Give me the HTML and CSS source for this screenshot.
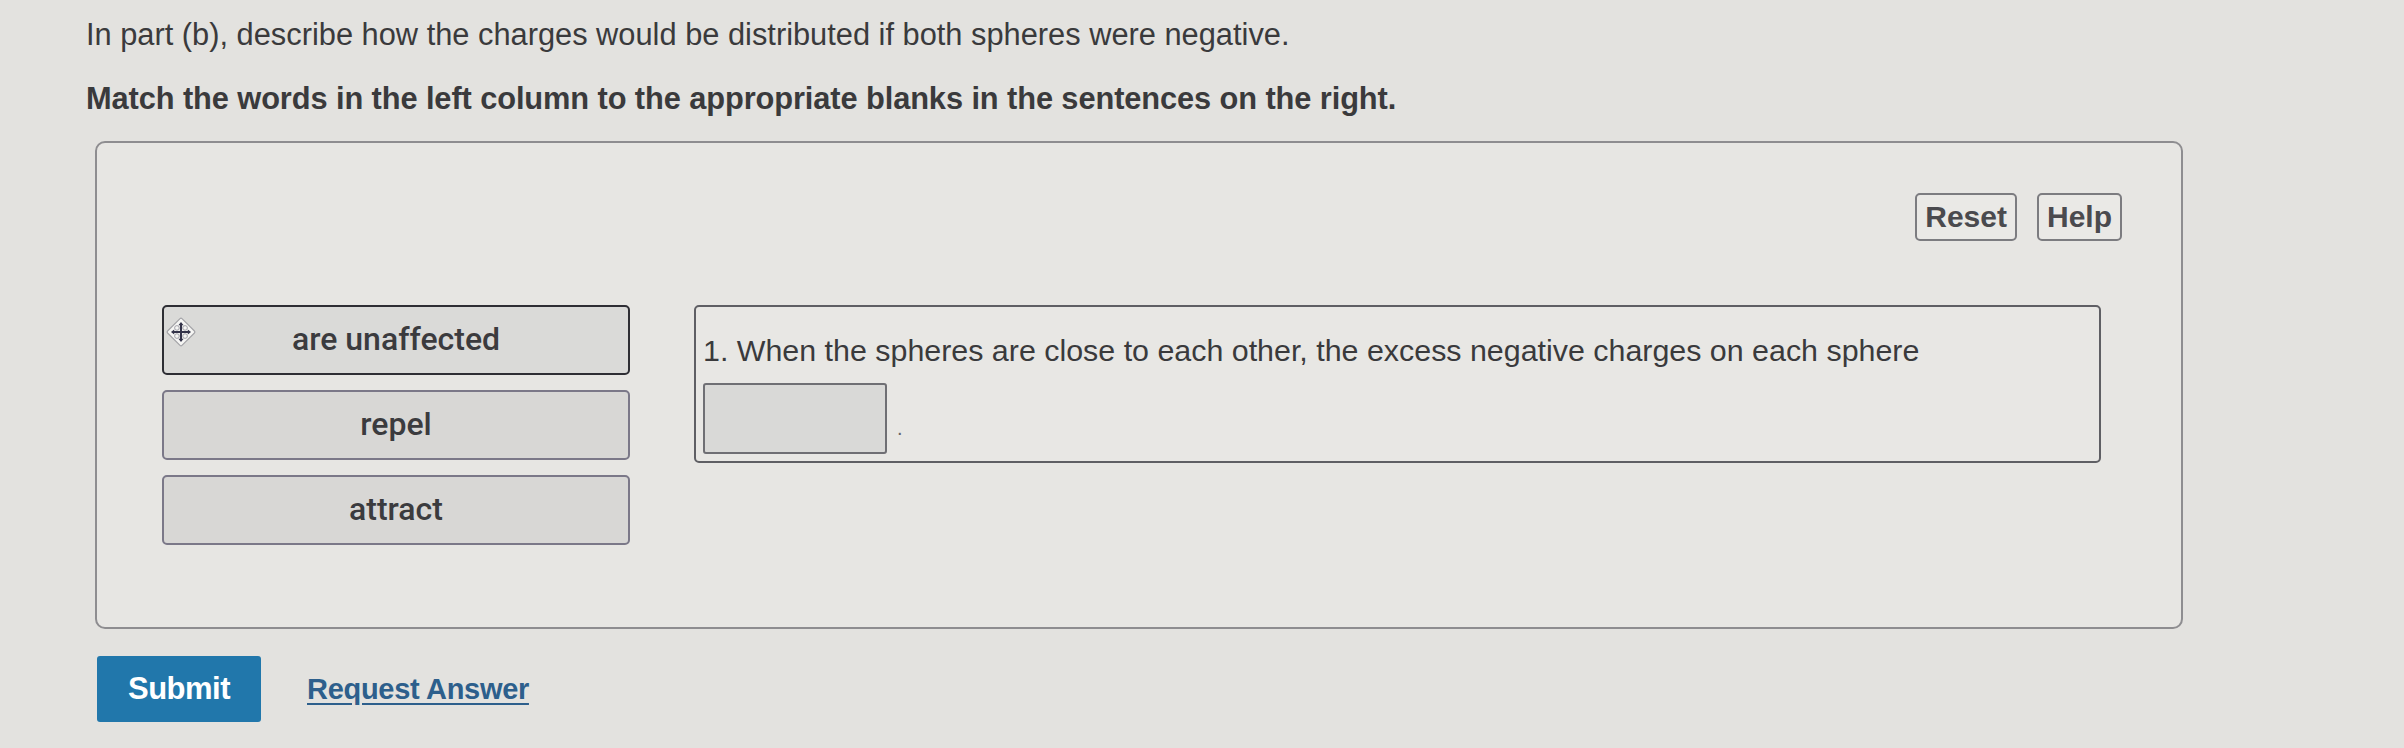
FILE: index.html
```html
<!DOCTYPE html>
<html>
<head>
<meta charset="utf-8">
<link rel="stylesheet" href="styles.css">
</head>
<body>
<div class="page">
  <p class="intro">In part (b), describe how the charges would be distributed if both spheres were negative.</p>
  <p class="instr">Match the words in the left column to the appropriate blanks in the sentences on the right.</p>
  <div class="panel">
    <div class="toolbar">
      <button class="tool">Reset</button>
      <button class="tool">Help</button>
    </div>
    <div class="content">
      <div class="choices">
        <div class="choice focused">
          <span class="grip">
            <svg width="38" height="38" viewBox="0 0 28 28">
              <rect x="6.5" y="6.5" width="15" height="15" rx="1" transform="rotate(45 14 14)" fill="#f6f6f4" stroke="#a4a4a8" stroke-width="0.9"/>
              <circle cx="11" cy="11" r="1.7" fill="none" stroke="#9c9ca4" stroke-width="0.7"/>
              <circle cx="17" cy="11" r="1.7" fill="none" stroke="#9c9ca4" stroke-width="0.7"/>
              <circle cx="11" cy="17" r="1.7" fill="none" stroke="#9c9ca4" stroke-width="0.7"/>
              <circle cx="17" cy="17" r="1.7" fill="none" stroke="#9c9ca4" stroke-width="0.7"/>
              <path d="M14 8 V20 M8 14 H20" stroke="#34344a" stroke-width="1.5" fill="none"/>
              <path d="M14 6.6 L12.1 9 H15.9 Z M14 21.4 L12.1 19 H15.9 Z M6.6 14 L9 12.1 V15.9 Z M21.4 14 L19 12.1 V15.9 Z" fill="#34344a"/>
            </svg>
          </span>
          are unaffected
        </div>
        <div class="choice">repel</div>
        <div class="choice">attract</div>
      </div>
      <div class="sentence">
        <p class="stext">1. When the spheres are close to each other, the excess negative charges on each sphere</p>
        <div class="blankrow"><span class="blank"></span><span class="dot">.</span></div>
      </div>
    </div>
  </div>
  <div class="actions">
    <button class="submit">Submit</button>
    <a class="request" href="#">Request Answer</a>
  </div>
</div>
</body>
</html>
```
FILE: styles.css
```css
html, body {
  margin: 0;
  padding: 0;
  background: #e3e2df;
}
body {
  font-family: "Liberation Sans", Arial, sans-serif;
  color: #3a3a3c;
  width: 2404px;
  height: 748px;
  overflow: hidden;
}
.page {
  padding: 17px 0 0 86px;
}
.intro {
  margin: 0;
  font-size: 30.8px;
  line-height: 36px;
}
.instr {
  margin: 28px 0 0 0;
  font-size: 30.8px;
  line-height: 36px;
  font-weight: bold;
  letter-spacing: -0.1px;
}
.panel {
  margin: 24px 0 0 9px;
  width: 2088px;
  height: 488px;
  box-sizing: border-box;
  border: 2px solid #8e8d90;
  border-radius: 10px;
  background: #e7e6e3;
  padding: 50px 59px 0 65px;
}
.toolbar {
  display: flex;
  justify-content: flex-end;
  gap: 20px;
  height: 48px;
}
.tool {
  font-family: "Liberation Sans", Arial, sans-serif;
  font-weight: bold;
  font-size: 30px;
  color: #4a4a4e;
  background: #eae9e6;
  border: 2px solid #7c7c80;
  border-radius: 5px;
  padding: 0 8px;
  height: 48px;
}
.content {
  display: flex;
  align-items: flex-start;
  gap: 64px;
  margin-top: 64px;
}
.choices {
  display: flex;
  flex-direction: column;
  gap: 15px;
  width: 468px;
}
.choice {
  position: relative;
  box-sizing: border-box;
  height: 70px;
  border: 2px solid #7b7888;
  border-radius: 5px;
  background: #d8d7d5;
  display: flex;
  align-items: center;
  justify-content: center;
  font-family: Roboto, "Liberation Sans", sans-serif;
  font-weight: 500;
  font-size: 32px;
  color: #3b3b3e;
  padding-bottom: 3px;
}
.choice.focused {
  border: 2.5px solid #2e2e34;
  background: #dadad8;
}
.grip {
  position: absolute;
  left: -2px;
  top: 6px;
  width: 38px;
  height: 38px;
}
.grip svg {
  display: block;
}
.sentence {
  box-sizing: border-box;
  width: 1407px;
  height: 158px;
  border: 2.5px solid #5f5f64;
  border-radius: 5px;
  background: #e8e7e4;
  padding: 25px 7px 0 7px;
}
.stext {
  margin: 0;
  font-size: 30.4px;
  line-height: 36px;
}
.blankrow {
  display: flex;
  align-items: flex-end;
  margin-top: 15px;
}
.blank {
  display: block;
  box-sizing: border-box;
  width: 184px;
  height: 71px;
  border: 2px solid #6f6f74;
  border-radius: 3px;
  background: #d9d9d7;
}
.dot {
  font-size: 20px;
  margin-left: 10px;
  margin-bottom: 14px;
  color: #666;
}
.actions {
  display: flex;
  align-items: center;
  gap: 46px;
  margin: 27px 0 0 11px;
}
.submit {
  font-family: "Liberation Sans", Arial, sans-serif;
  font-weight: bold;
  font-size: 31px;
  color: #fff;
  background: #2177ab;
  border: none;
  border-radius: 3px;
  width: 164px;
  height: 66px;
  letter-spacing: -0.5px;
}
.request {
  font-family: "Liberation Sans", Arial, sans-serif;
  font-weight: bold;
  font-size: 29px;
  color: #2d5f8c;
  text-decoration: underline;
  text-underline-offset: 4px;
  letter-spacing: -0.3px;
}
```
